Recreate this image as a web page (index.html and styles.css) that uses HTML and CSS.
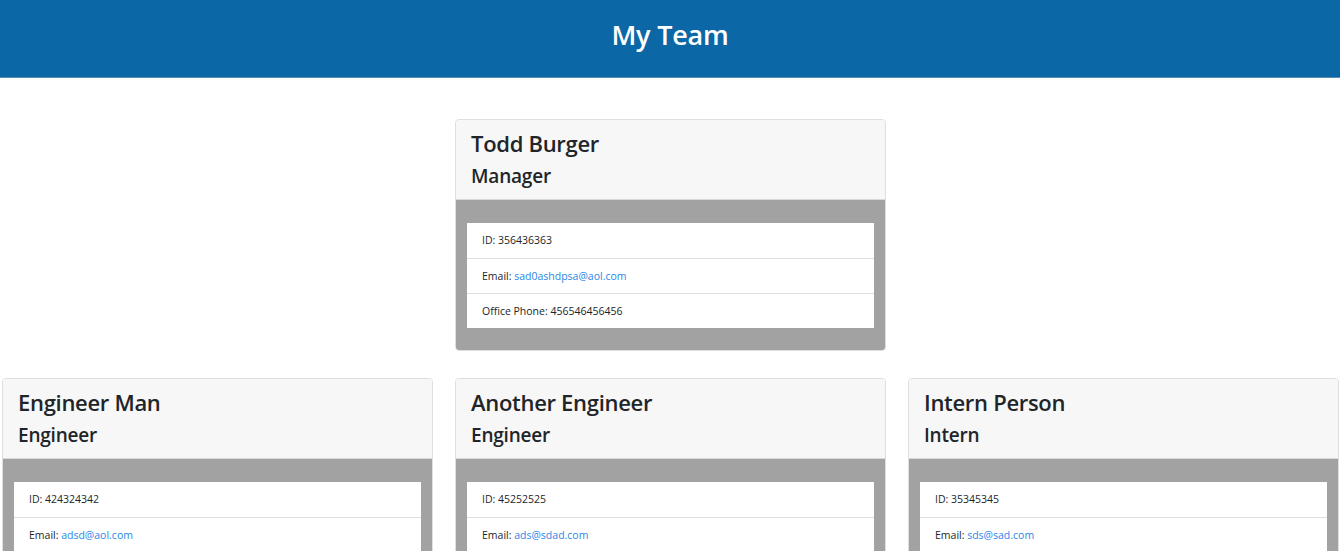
FILE: index.html
```html
<!DOCTYPE html>
<html lang="en">
<head>
  <meta charset="UTF-8" />
  <meta name="viewport" content="width=device-width, initial-scale=1.0" />
  <title>My Team</title>
  <link rel="stylesheet" href="styles.css">
</head>
<body>

  <div class="header">
    <h1>My Team</h1>
  </div>

  <div class="team">
    <div class="team-row">
      <div class="card card-center">
        <div class="card-header">
          <h2 class="card-name">Todd Burger</h2>
          <h3 class="card-role">Manager</h3>
        </div>
        <div class="card-body">
          <ul class="info-list">
            <li class="info-item">ID: 356436363</li>
            <li class="info-item">Email: <a href="mailto:sad0ashdpsa@aol.com">sad0ashdpsa@aol.com</a></li>
            <li class="info-item">Office Phone: 456546456456</li>
          </ul>
        </div>
      </div>
    </div>

    <div class="team-row">
      <div class="card">
        <div class="card-header">
          <h2 class="card-name">Engineer Man</h2>
          <h3 class="card-role">Engineer</h3>
        </div>
        <div class="card-body">
          <ul class="info-list">
            <li class="info-item">ID: 424324342</li>
            <li class="info-item">Email: <a href="mailto:adsd@aol.com">adsd@aol.com</a></li>
            <li class="info-item">GitHub: <a href="#">engineerman</a></li>
          </ul>
        </div>
      </div>

      <div class="card">
        <div class="card-header">
          <h2 class="card-name">Another Engineer</h2>
          <h3 class="card-role">Engineer</h3>
        </div>
        <div class="card-body">
          <ul class="info-list">
            <li class="info-item">ID: 45252525</li>
            <li class="info-item">Email: <a href="mailto:ads@sdad.com">ads@sdad.com</a></li>
            <li class="info-item">GitHub: <a href="#">anotherengineer</a></li>
          </ul>
        </div>
      </div>

      <div class="card">
        <div class="card-header">
          <h2 class="card-name">Intern Person</h2>
          <h3 class="card-role">Intern</h3>
        </div>
        <div class="card-body">
          <ul class="info-list">
            <li class="info-item">ID: 35345345</li>
            <li class="info-item">Email: <a href="mailto:sds@sad.com">sds@sad.com</a></li>
            <li class="info-item">School: University</li>
          </ul>
        </div>
      </div>
    </div>
  </div>

</body>
</html>
```

FILE: styles.css
```css
body {
  margin: 0;
  padding: 0;
  font-family: "Open Sans", "Noto Sans", sans-serif;
  color: #212529;
  background-color: white;
}

.header {
  height: 78px;
  background-color: #0b67a5;
  border-bottom: 1px solid #5b8db3;
  box-sizing: border-box;
  display: flex;
  align-items: center;
  justify-content: center;
  padding-bottom: 9px;
}

.header h1 {
  margin: 0;
  color: white;
  font-size: 27px;
  font-weight: 600;
  letter-spacing: -0.2px;
}

.team {
  padding: 41px 1px 0 2px;
  display: flex;
  flex-direction: column;
  gap: 27px;
}

.team-row {
  display: grid;
  grid-template-columns: repeat(3, 1fr);
  gap: 22px;
}

.card-center {
  grid-column: 2;
}

.card {
  border: 1px solid rgba(0, 0, 0, 0.125);
  border-radius: 4px;
  overflow: hidden;
}

.card-header {
  background-color: #f7f7f7;
  border-bottom: 1px solid rgba(0, 0, 0, 0.125);
  padding: 8px 15px 10px;
  height: 61px;
}

.card-name {
  margin: 0;
  font-size: 22px;
  font-weight: 600;
  line-height: 30px;
  letter-spacing: -0.3px;
}

.card-role {
  margin: 0;
  font-size: 19px;
  font-weight: 600;
  line-height: 36px;
  letter-spacing: -0.2px;
}

.card-body {
  background-color: #a2a2a2;
  padding: 23px 11px 22px;
}

.info-list {
  list-style: none;
  margin: 0;
  padding: 0;
  background: white;
}

.info-item {
  font-size: 10.5px;
  line-height: 16px;
  padding: 9px 15px;
  height: 16px;
  border-top: 1px solid rgba(0, 0, 0, 0.125);
}

.info-item:first-child {
  border-top: none;
  height: 17px;
}

.info-item a {
  color: #2b86e8;
  text-decoration: none;
}
```
